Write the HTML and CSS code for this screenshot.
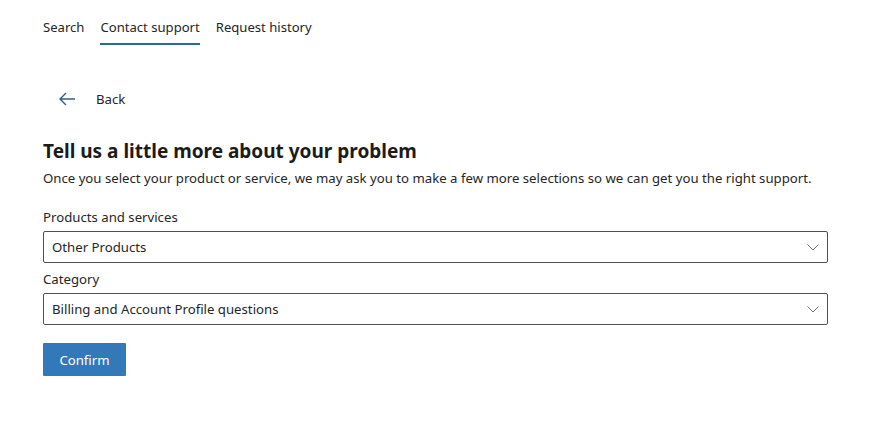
FILE: index.html
```html
<!DOCTYPE html>
<html>
<head>
<meta charset="utf-8">
<link rel="stylesheet" href="styles.css">
</head>
<body>
<nav class="tabs">
  <a class="tab">Search</a>
  <a class="tab active">Contact support</a>
  <a class="tab">Request history</a>
</nav>
<main class="content">
  <div class="back">
    <svg class="back-icon" width="18" height="14" viewBox="0 0 18 14"><path d="M8 1 L2 7 L8 13 M2 7 H17" fill="none" stroke="#2f5d8f" stroke-width="1.4"/></svg>
    <span>Back</span>
  </div>
  <h1 class="title">Tell us a little more about your problem</h1>
  <p class="desc">Once you select your product or service, we may ask you to make a few more selections so we can get you the right support.</p>
  <div class="field">
    <label class="label">Products and services</label>
    <div class="select"><span>Other Products</span><svg width="12" height="7" viewBox="0 0 12 7"><path d="M0.5 0.5 L6 6 L11.5 0.5" fill="none" stroke="#707070" stroke-width="1"/></svg></div>
  </div>
  <div class="field">
    <label class="label">Category</label>
    <div class="select"><span>Billing and Account Profile questions</span><svg width="12" height="7" viewBox="0 0 12 7"><path d="M0.5 0.5 L6 6 L11.5 0.5" fill="none" stroke="#707070" stroke-width="1"/></svg></div>
  </div>
  <button class="confirm">Confirm</button>
</main>
</body>
</html>
```
FILE: styles.css
```css
* { box-sizing: border-box; }
body {
  margin: 0;
  font-family: "Noto Sans", "Open Sans", sans-serif;
  color: #262626;
  background: #fff;
  font-size: 13.2px;
}
.tabs {
  display: flex;
  gap: 16px;
  padding: 17px 0 0 43px;
}
.tab {
  font-size: 13.1px;
  line-height: 20px;
  padding-bottom: 6px;
  border-bottom: 2px solid transparent;
  color: #262626;
}
.tab.active { border-bottom-color: #2b67a5; }
.content { padding: 0 50px 0 43px; }
.back {
  display: flex;
  align-items: center;
  gap: 20px;
  margin: 42px 0 0 15px;
  height: 24px;
}
.title {
  margin: 26px 0 0;
  font-size: 19px;
  font-weight: 700;
  line-height: 28px;
  color: #1b1b1b;
}
.desc {
  margin: 3px 0 0;
  line-height: 20px;
}
.field { margin-top: 19px; }
.field + .field { margin-top: 6px; }
.label {
  display: block;
  line-height: 20px;
  margin-bottom: 4px;
}
.select {
  height: 32px;
  border: 1px solid #505050;
  border-radius: 2px;
  display: flex;
  align-items: center;
  justify-content: space-between;
  padding: 0 8px 0 8px;
}
.confirm {
  display: block;
  margin-top: 18px;
  height: 33px;
  width: 83px;
  border: none;
  background: #3378b8;
  color: #fff;
  font-family: inherit;
  font-size: 13.2px;
  border-radius: 1px;
}
```
